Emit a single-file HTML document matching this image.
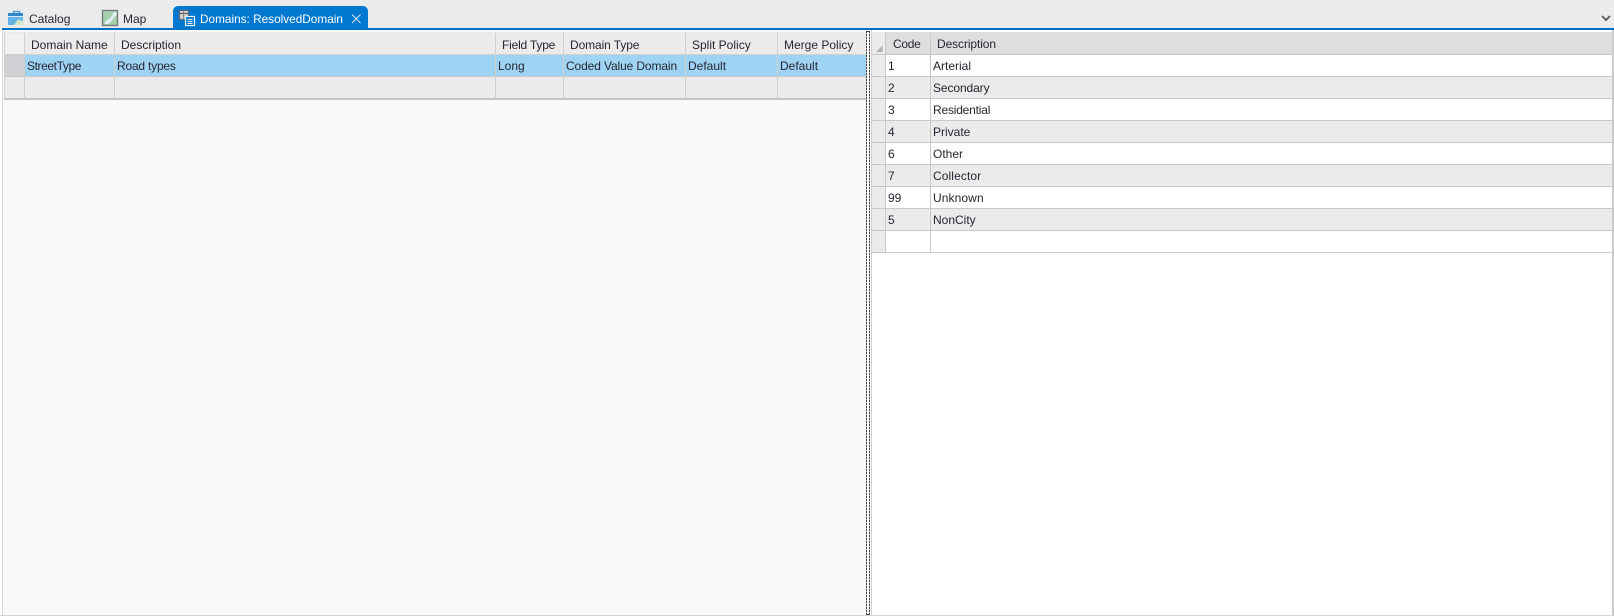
<!DOCTYPE html>
<html><head><meta charset="utf-8"><style>
html,body{margin:0;padding:0}
body{width:1614px;height:616px;position:relative;overflow:hidden;background:#fff;font-family:"Liberation Sans",sans-serif;font-size:12px;color:#262632}
.a{position:absolute}
.t{position:absolute;white-space:nowrap;line-height:16px}
</style></head><body>
<div class="a" style="left:0;top:0;width:1614px;height:28px;background:#ebebeb"></div>
<div class="a" style="left:2px;top:28px;width:1612px;height:2px;background:#0072c6"></div>
<div class="a" style="left:173px;top:6px;width:195px;height:22px;background:#0078d0;border-radius:5px 5px 0 0"></div>

<svg class="a" style="left:0;top:0" width="380" height="30" viewBox="0 0 380 30">
<path d="M13.500 13.500v-2h6v2" fill="none" stroke="#3f97d6" stroke-width="1.300"/>
<rect x="8" y="13" width="15" height="12" fill="#66b4e6"/>
<rect x="8" y="13" width="15" height="3" fill="#2f88ca"/>
<path d="M8 16.500h15" stroke="#d5ebf8" stroke-width="1"/>
<path d="M14 25l4-5.500 5 1.500v4z" fill="#d5e6cf"/>
<rect x="102.500" y="10.500" width="15" height="15" fill="#a6cfae" stroke="#777" stroke-width="1.300"/>
<path d="M104 24l3-4 3-1.500 2-3 2-3.500h2.500v3l-3 3-2 3-3 3z" fill="#e2f1f5"/>
<rect x="179.500" y="10.500" width="9" height="9" fill="#c9cdd0" stroke="#666" stroke-width="1"/>
<path d="M180 13.500h8" stroke="#555" stroke-width="1"/>
<path d="M183.500 11v8" stroke="#777" stroke-width=".8"/>
<rect x="185.500" y="16.500" width="9" height="9" fill="#0078d0" stroke="#e6f2fb" stroke-width="1.200"/>
<path d="M187.500 19.500h5M187.500 21.500h5M187.500 23.500h5" stroke="#e6f2fb" stroke-width=".9"/>
<path d="M352 14.500l8.500 8.500M360.500 14.500l-8.500 8.500" stroke="#cfe6f7" stroke-width="1.100" fill="none"/>
</svg>
<div class="t" style="left:29px;top:11px;font-size:12px">Catalog</div>
<div class="t" style="left:123px;top:11px;font-size:12px">Map</div>
<div class="t" style="left:200px;top:11px;font-size:11.800px;color:#fff">Domains: ResolvedDomain</div>
<svg class="a" style="left:1599px;top:13px" width="14" height="10"><path d="M3 3l4 4 4-4" fill="none" stroke="#555" stroke-width="1.700"/></svg>

<!-- left panel -->
<div class="a" style="left:3px;top:30px;width:863px;height:585px;background:#f9f9f9"></div>
<div class="a" style="left:0;top:615px;width:1614px;height:1px;background:#d4d4d4"></div>
<div class="a" style="left:2px;top:30px;width:1px;height:585px;background:#d8d8d8"></div>
<div class="a" style="left:4px;top:32px;width:862px;height:67px;background:#ebebeb"></div>
<div class="a" style="left:5px;top:33px;width:19px;height:21px;background:#f1f1f1"></div>
<div class="a" style="left:4px;top:55px;width:862px;height:21px;background:#9fd3f3"></div>
<div class="a" style="left:5px;top:55px;width:19px;height:21px;background:#cfd1d4"></div>
<div class="a" style="left:4px;top:54px;width:862px;height:1px;background:#d0d0d0"></div>
<div class="a" style="left:4px;top:76px;width:862px;height:1px;background:#c8c8c8"></div>
<div class="a" style="left:4px;top:98px;width:862px;height:2px;background:#c4c4c4"></div>
<div class="a" style="left:4px;top:32px;width:1px;height:67px;background:#d0d0d0"></div>
<div class="a" style="left:24px;top:33px;width:1px;height:66px;background:#cfcfcf"></div>
<div class="a" style="left:114px;top:33px;width:1px;height:66px;background:#cfcfcf"></div>
<div class="a" style="left:495px;top:33px;width:1px;height:66px;background:#cfcfcf"></div>
<div class="a" style="left:563px;top:33px;width:1px;height:66px;background:#cfcfcf"></div>
<div class="a" style="left:685px;top:33px;width:1px;height:66px;background:#cfcfcf"></div>
<div class="a" style="left:777px;top:33px;width:1px;height:66px;background:#cfcfcf"></div>

<div class="t" style="left:31px;top:37px">Domain Name</div>
<div class="t" style="left:121px;top:37px">Description</div>
<div class="t" style="left:502px;top:37px;letter-spacing:-.2px">Field Type</div>
<div class="t" style="left:570px;top:37px;letter-spacing:-.1px">Domain Type</div>
<div class="t" style="left:692px;top:37px">Split Policy</div>
<div class="t" style="left:784px;top:37px">Merge Policy</div>
<div class="t" style="left:27px;top:58px;letter-spacing:-.4px">StreetType</div>
<div class="t" style="left:117px;top:58px;letter-spacing:-.2px">Road types</div>
<div class="t" style="left:498px;top:58px">Long</div>
<div class="t" style="left:566px;top:58px;letter-spacing:-.12px">Coded Value Domain</div>
<div class="t" style="left:688px;top:58px">Default</div>
<div class="t" style="left:780px;top:58px">Default</div>

<!-- splitter -->
<div class="a" style="left:866px;top:31px;width:1px;height:584px;background:repeating-linear-gradient(#444 0 2px,#bbb 2px 3px)"></div>
<div class="a" style="left:869px;top:31px;width:1px;height:584px;background:repeating-linear-gradient(#444 0 2px,#bbb 2px 3px)"></div>
<div class="a" style="left:866px;top:31px;width:4px;height:1px;background:#444"></div>
<div class="a" style="left:866px;top:614px;width:4px;height:1px;background:#444"></div>

<!-- right panel -->
<div class="a" style="left:871px;top:30px;width:1px;height:585px;background:#cfcfcf"></div>
<div class="a" style="left:1612px;top:30px;width:2px;height:585px;background:#cbcbcb"></div>
<div class="a" style="left:872px;top:32px;width:740px;height:22px;background:#dedede"></div>
<div class="a" style="left:872px;top:32px;width:13px;height:220px;background:#ebebeb"></div>
<div class="a" style="left:885px;top:77px;width:727px;height:21px;background:#ebebeb"></div>
<div class="a" style="left:885px;top:121px;width:727px;height:21px;background:#ebebeb"></div>
<div class="a" style="left:885px;top:165px;width:727px;height:21px;background:#ebebeb"></div>
<div class="a" style="left:885px;top:209px;width:727px;height:21px;background:#ebebeb"></div>
<div class="a" style="left:872px;top:54px;width:740px;height:1px;background:#c8c8c8"></div>
<div class="a" style="left:872px;top:76px;width:740px;height:1px;background:#c8c8c8"></div>
<div class="a" style="left:872px;top:98px;width:740px;height:1px;background:#c8c8c8"></div>
<div class="a" style="left:872px;top:120px;width:740px;height:1px;background:#c8c8c8"></div>
<div class="a" style="left:872px;top:142px;width:740px;height:1px;background:#c8c8c8"></div>
<div class="a" style="left:872px;top:164px;width:740px;height:1px;background:#c8c8c8"></div>
<div class="a" style="left:872px;top:186px;width:740px;height:1px;background:#c8c8c8"></div>
<div class="a" style="left:872px;top:208px;width:740px;height:1px;background:#c8c8c8"></div>
<div class="a" style="left:872px;top:230px;width:740px;height:1px;background:#c8c8c8"></div>
<div class="a" style="left:872px;top:252px;width:740px;height:1px;background:#c8c8c8"></div>
<div class="a" style="left:885px;top:33px;width:1px;height:220px;background:#c8c8c8"></div>
<div class="a" style="left:930px;top:33px;width:1px;height:220px;background:#c8c8c8"></div>
<svg class="a" style="left:875px;top:45px" width="9" height="8"><path d="M7.500 .5v6.500H1z" fill="#b0b0b0"/></svg>

<div class="t" style="left:893px;top:36px;letter-spacing:-.3px">Code</div>
<div class="t" style="left:937px;top:36px;letter-spacing:-.1px">Description</div>
<div class="t" style="left:888px;top:58px">1</div><div class="t" style="left:933px;top:58px">Arterial</div>
<div class="t" style="left:888px;top:80px">2</div><div class="t" style="left:933px;top:80px;letter-spacing:-.1px">Secondary</div>
<div class="t" style="left:888px;top:102px">3</div><div class="t" style="left:933px;top:102px;letter-spacing:-.2px">Residential</div>
<div class="t" style="left:888px;top:124px">4</div><div class="t" style="left:933px;top:124px">Private</div>
<div class="t" style="left:888px;top:146px">6</div><div class="t" style="left:933px;top:146px">Other</div>
<div class="t" style="left:888px;top:168px">7</div><div class="t" style="left:933px;top:168px;letter-spacing:.1px">Collector</div>
<div class="t" style="left:888px;top:190px">99</div><div class="t" style="left:933px;top:190px;letter-spacing:.1px">Unknown</div>
<div class="t" style="left:888px;top:212px">5</div><div class="t" style="left:933px;top:212px">NonCity</div>
</body></html>
